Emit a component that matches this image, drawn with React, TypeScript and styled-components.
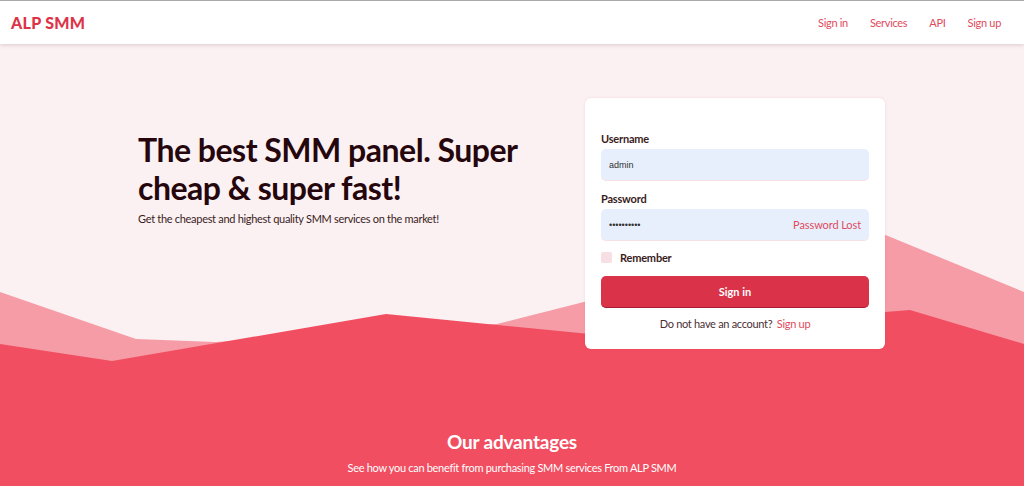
import React from "react";
import styled, { createGlobalStyle } from "styled-components";

const Global = createGlobalStyle`
  html, body { margin: 0; padding: 0; background: #fbf1f2; }
  body { font-family: Lato, "Noto Sans", sans-serif; color: #25060c; overflow: hidden; }
  * { box-sizing: border-box; }
`;

const Page = styled.div`
  width: 1024px;
  height: 486px;
  display: flex;
  flex-direction: column;
  overflow: hidden;
  border-top: 1px solid #a8a8a8;
`;

const Navbar = styled.header`
  height: 43px;
  flex: none;
  display: flex;
  align-items: center;
  justify-content: space-between;
  padding: 0 23px 0 11px;
  background: #fff;
  box-shadow: 0 1px 4px rgba(120, 60, 70, 0.22);
  position: relative;
  z-index: 2;
`;

const Logo = styled.a`
  font-size: 16px;
  font-weight: 900;
  letter-spacing: 0.3px;
  color: #dc3349;
`;

const NavLinks = styled.nav`
  display: flex;
  gap: 22px;
`;

const NavLink = styled.a`
  font-size: 11px;
  letter-spacing: -0.3px;
  color: #e04a5d;
`;

const Hero = styled.section`
  position: relative;
  height: 358px;
  flex: none;
  display: flex;
  align-items: flex-start;
  padding: 54px 139px 0 138px;
  justify-content: space-between;
`;

const Waves = styled.svg`
  position: absolute;
  left: 0;
  top: 0;
  width: 1024px;
  height: 358px;
`;

const Intro = styled.div`
  position: relative;
  width: 390px;
  padding-top: 33px;
`;

const Title = styled.h1`
  margin: 0 0 4px;
  font-size: 32px;
  line-height: 38px;
  font-weight: 700;
  letter-spacing: -0.5px;
  color: #25060c;
`;

const Lead = styled.p`
  margin: 0;
  font-size: 11px;
  line-height: 16px;
  letter-spacing: -0.3px;
  color: #3a1c22;
`;

const Card = styled.form`
  position: relative;
  width: 300px;
  height: 251px;
  padding: 33px 16px 0;
  background: #fff;
  border-radius: 6px;
  box-shadow: 0 0 3px rgba(220, 51, 73, 0.12);
`;

const Label = styled.label`
  display: block;
  font-size: 11px;
  line-height: 15px;
  font-weight: 700;
  letter-spacing: -0.2px;
  color: #3a1c22;
`;

const Field = styled.div`
  height: 32px;
  margin: 3px 0 10px;
  padding: 0 8px;
  display: flex;
  align-items: center;
  justify-content: space-between;
  background: #e7effc;
  border-radius: 5px;
  border-bottom: 1px solid #f8dfe3;
`;

const Input = styled.input`
  width: 150px;
  border: 0;
  padding: 0;
  outline: none;
  background: transparent;
  font-family: "Liberation Sans", sans-serif;
  font-size: 9px;
  color: #333;
`;

const RedLink = styled.a`
  font-size: 11px;
  letter-spacing: -0.1px;
  color: #e04a5d;
`;

const RememberRow = styled.div`
  display: flex;
  align-items: center;
  gap: 8px;
  height: 13px;
`;

const Check = styled.span`
  width: 11px;
  height: 11px;
  border-radius: 2px;
  background: #f7dfe3;
`;

const SubmitButton = styled.button`
  display: block;
  width: 100%;
  height: 32px;
  margin-top: 12px;
  border: 0;
  border-bottom: 1px solid #a81c30;
  border-radius: 5px;
  background: #d93249;
  color: #fff;
  font-family: inherit;
  font-size: 11px;
  font-weight: 700;
`;

const SignupRow = styled.p`
  margin: 9px 0 0;
  text-align: center;
  font-size: 11px;
  line-height: 14px;
  letter-spacing: -0.3px;
  color: #4a2f34;
  span { margin-left: 2px; color: #e04a5d; }
`;

const Advantages = styled.section`
  flex: 1;
  background: #f14e61;
  color: #fff;
  text-align: center;
`;

const AdvTitle = styled.h2`
  margin: 0 0 7px;
  padding-top: 28px;
  font-size: 19px;
  line-height: 24px;
  font-weight: 700;
  letter-spacing: -0.2px;
`;

const AdvText = styled.p`
  margin: 0;
  font-size: 11px;
  line-height: 14px;
  letter-spacing: -0.3px;
`;

export default function App() {
  return (
    <>
      <Global />
      <Page>
        <Navbar>
          <Logo>ALP SMM</Logo>
          <NavLinks>
            <NavLink>Sign in</NavLink>
            <NavLink>Services</NavLink>
            <NavLink>API</NavLink>
            <NavLink>Sign up</NavLink>
          </NavLinks>
        </Navbar>
        <Hero>
          <Waves viewBox="0 0 1024 358">
            <path d="M0 248 L136 295 L215 298 L497 280 L871 185 L1024 248 V358 H0 Z" fill="#f69ca6" />
            <path d="M0 300 L112 317 L386 270 L600 291 L885 268 L910 266 L1024 300 V358 H0 Z" fill="#f14e61" />
          </Waves>
          <Intro>
            <Title>The best SMM panel. Super cheap &amp; super fast!</Title>
            <Lead>Get the cheapest and highest quality SMM services on the market!</Lead>
          </Intro>
          <Card>
            <Label>Username</Label>
            <Field>
              <Input defaultValue="admin" />
            </Field>
            <Label>Password</Label>
            <Field>
              <Input type="password" defaultValue="1234567890" />
              <RedLink>Password Lost</RedLink>
            </Field>
            <RememberRow>
              <Check />
              <Label>Remember</Label>
            </RememberRow>
            <SubmitButton type="button">Sign in</SubmitButton>
            <SignupRow>
              Do not have an account? <span>Sign up</span>
            </SignupRow>
          </Card>
        </Hero>
        <Advantages>
          <AdvTitle>Our advantages</AdvTitle>
          <AdvText>See how you can benefit from purchasing SMM services From ALP SMM</AdvText>
        </Advantages>
      </Page>
    </>
  );
}
